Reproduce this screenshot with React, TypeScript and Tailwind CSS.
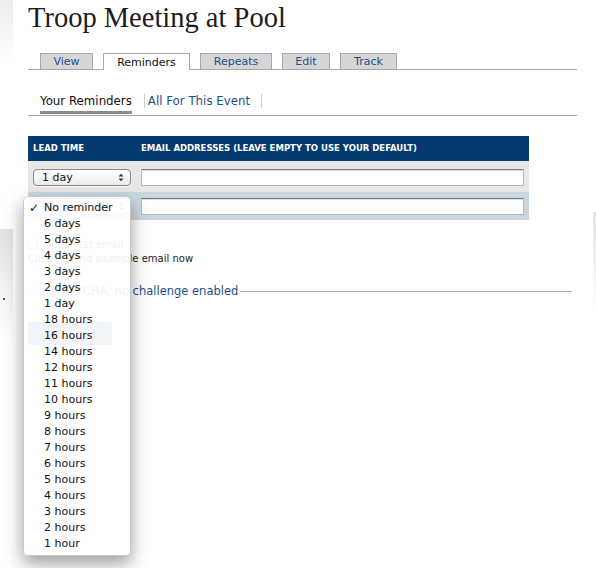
import React from 'react'

const tabs = [
  { label: 'View', w: 'w-[53px]' },
  { label: 'Reminders', w: 'w-[87px]', active: true },
  { label: 'Repeats', w: 'w-[72px]' },
  { label: 'Edit', w: 'w-[48px]' },
  { label: 'Track', w: 'w-[57px]' },
]

const leadTimes = [
  'No reminder',
  '6 days',
  '5 days',
  '4 days',
  '3 days',
  '2 days',
  '1 day',
  '18 hours',
  '16 hours',
  '14 hours',
  '12 hours',
  '11 hours',
  '10 hours',
  '9 hours',
  '8 hours',
  '7 hours',
  '6 hours',
  '5 hours',
  '4 hours',
  '3 hours',
  '2 hours',
  '1 hour',
]

function UpDown() {
  return (
    <svg width="6" height="9" viewBox="0 0 6 9" className="shrink-0">
      <path d="M0.5 3.5 L3 0.8 L5.5 3.5 Z" fill="#333" />
      <path d="M0.5 5.5 L3 8.2 L5.5 5.5 Z" fill="#333" />
    </svg>
  )
}

function FakeSelect({ value }: { value: string }) {
  return (
    <div className="flex h-[17px] w-[98px] items-center justify-between rounded-[4px] border border-[#8a8a8a] bg-gradient-to-b from-white to-[#ececec] pl-[8px] pr-[6px] text-[11px] leading-[15px] text-[#111] shadow-[0_1px_0_rgba(255,255,255,0.8)]">
      <span>{value}</span>
      <UpDown />
    </div>
  )
}

function TextBox() {
  return (
    <div className="h-[17px] w-[383px] border border-[#b8b8b8] border-t-[#7a7a7a] bg-white shadow-[inset_0_1px_1px_rgba(0,0,0,0.15)]" />
  )
}

export default function App() {
  return (
    <div
      className="relative h-[568px] w-[596px] overflow-hidden bg-white text-[#222]"
      style={{ fontFamily: '"DejaVu Sans", Verdana, sans-serif' }}
    >
      {/* page background shading at the edges */}
      <div className="absolute left-0 top-0 h-[62px] w-[13px] bg-gradient-to-b from-[#ececec] to-white" />
      <div className="absolute left-0 top-[229px] h-[112px] w-[13px] bg-gradient-to-b from-[#e2e2e2] to-white" />
      <div className="absolute left-[3px] top-[298px] h-[2px] w-[2px] bg-[#555]" />
      <div className="absolute right-0 top-[212px] h-[98px] w-[3px] bg-gradient-to-b from-[#e4e4e4] to-white" />

      <div className="relative pl-[28px] pr-[19px]">
        <h1
          className="mt-[1px] text-[28.5px] leading-[33px] text-[#1c1c1c]"
          style={{ fontFamily: '"Liberation Serif", Georgia, serif' }}
        >
          Troop Meeting at Pool
        </h1>

        {/* tabs */}
        <div className="mt-[19px] flex h-[17px] items-end gap-[10px] border-b border-[#a8a8a8] pl-[12px]">
          {tabs.map((t) =>
            t.active ? (
              <div
                key={t.label}
                className={`${t.w} mb-[-1px] flex h-[17px] items-center justify-center border border-b-0 border-[#a8a8a8] bg-white text-[11px] leading-[15px] text-[#111]`}
              >
                {t.label}
              </div>
            ) : (
              <div
                key={t.label}
                className={`${t.w} flex h-[16px] items-center justify-center border border-b-0 border-[#a8a8a8] bg-[#d6d6d6] text-[11px] leading-[15px] text-[#1d4f8c]`}
              >
                {t.label}
              </div>
            ),
          )}
        </div>

        {/* sub navigation */}
        <div className="mt-[24px] flex items-start border-b border-[#a8a8a8] pb-px pl-[12px] text-[11.8px] leading-[14px]">
          <div className="border-b-[3px] border-[#8c8c8c] pb-[3px] text-[#111]">
            Your Reminders
          </div>
          <div className="ml-[12px] border-x border-[#cfcfcf] pl-[3px] pr-[11px] text-[#1d4f8c]">
            All For This Event
          </div>
        </div>

        {/* reminders table */}
        <div className="mt-[20px] w-[501px]">
          <div className="grid h-[25px] grid-cols-[108px_1fr] items-center bg-[#053a70] text-[8.5px] font-bold uppercase text-white">
            <div className="pl-[5px]">Lead Time</div>
            <div className="pl-[5px]">Email Addresses (leave empty to use your default)</div>
          </div>
          <div className="grid h-[31px] grid-cols-[108px_1fr] bg-[#e7e7e7] pt-[8px]">
            <div className="pl-[5px]">
              <FakeSelect value="1 day" />
            </div>
            <div className="pl-[5px]">
              <TextBox />
            </div>
          </div>
          <div className="grid h-[28px] grid-cols-[108px_1fr] bg-[#c7d7e1] pt-[6px]">
            <div className="pl-[5px]">
              <FakeSelect value="No reminder" />
            </div>
            <div className="pl-[5px]">
              <TextBox />
            </div>
          </div>
        </div>

        {/* test email */}
        <div className="mt-[18px] text-[10px] leading-[14px]">
          <div className="flex items-center gap-[7px]">
            <div className="h-[10px] w-[10px] rounded-[2px] border border-[#888] bg-white" />
            <span>Send test email</span>
          </div>
          <div>Click to send example email now</div>
        </div>

        {/* captcha fieldset */}
        <div className="mt-[17px] flex items-center pr-[5px]">
          <div className="h-px w-[12px] bg-[#b0b0b0]" />
          <span className="px-[2px] text-[11.5px] leading-[16px] text-[#1d4f8c]">
            reCAPTCHA: no challenge enabled
          </span>
          <div className="h-px flex-1 bg-[#b0b0b0]" />
        </div>

        <div className="mt-[23px] flex h-[23px] w-[84px] items-center justify-center rounded-[3px] bg-[#3b6fa6] text-[11px] font-bold text-white">
          Save
        </div>
      </div>

      {/* open lead time menu */}
      <div className="absolute left-[23px] top-[196px] h-[360px] w-[108px] rounded-[5px] border border-[#c8c8c8] bg-white/[0.93] pt-[3px] shadow-[0_8px_18px_rgba(0,0,0,0.38)]">
        {leadTimes.map((t, i) => (
          <div key={t} className="flex h-[16px] items-center text-[11px] leading-[16px] text-[#111]">
            <span className="w-[20px] pl-[5px] text-[12px]">{i === 0 ? '✓' : ''}</span>
            <span>{t}</span>
          </div>
        ))}
      </div>
    </div>
  )
}
